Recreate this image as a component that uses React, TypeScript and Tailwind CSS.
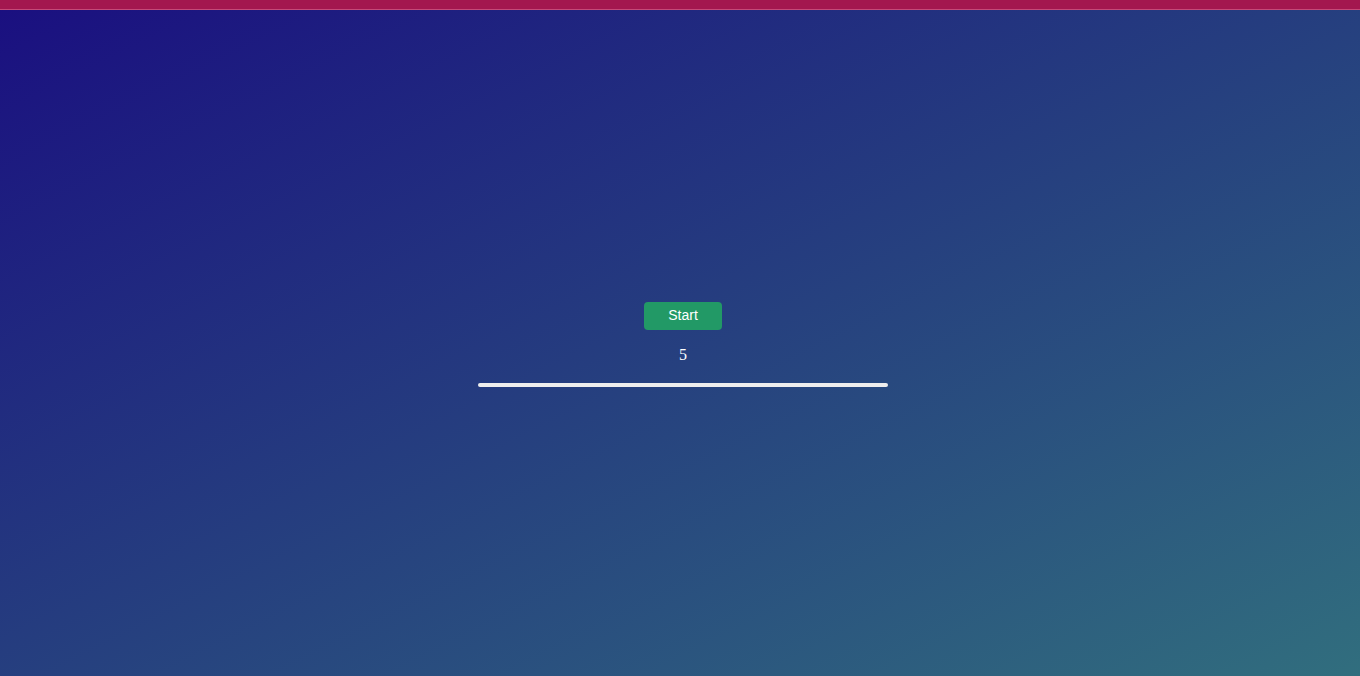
export default function App() {
  return (
    <div className="min-h-screen flex flex-col bg-linear-to-br/srgb from-[#1a0f80] to-[#316e7e]">
      {/* top strip */}
      <div className="h-[10px] bg-[#a3174f] border-b border-[#c54a78]" />

      <main className="flex-1 flex flex-col items-center justify-center pl-[6px] pt-[2px]">
        <button className="w-[78px] h-[28px] rounded-[4px] bg-[#229966] text-white text-[14px] font-['Liberation_Sans',Arial,sans-serif]">
          Start
        </button>
        <div className="mt-[14px] text-white text-[16px] leading-[22px] font-['Liberation_Serif','Times_New_Roman',serif]">
          5
        </div>
        <div className="mt-[17px] w-[410px] h-[4px] rounded-full bg-[#eeeeee]" />
      </main>
    </div>
  )
}
